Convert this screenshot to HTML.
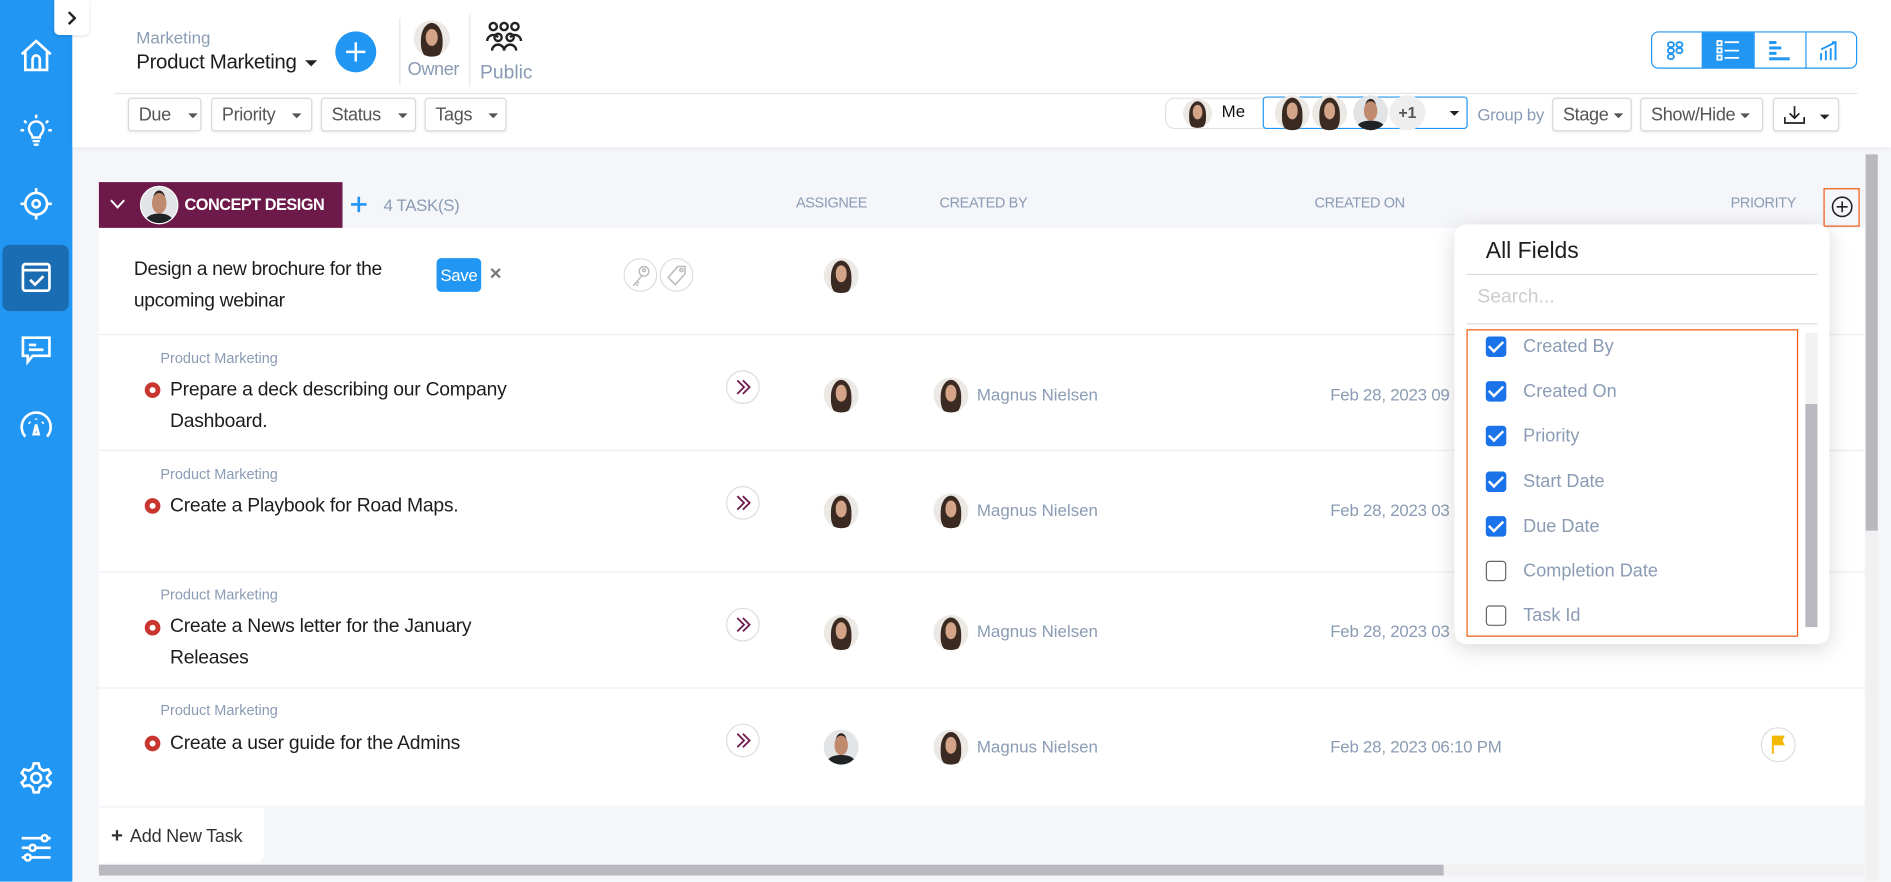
<!DOCTYPE html>
<html><head><meta charset="utf-8">
<style>
*{box-sizing:border-box;margin:0;padding:0}
html,body{width:1891px;height:881px;overflow:hidden;background:#f5f6fa;font-family:"Liberation Sans",sans-serif}
#w{position:absolute;left:0;top:0;width:1568px;height:731px;transform:scale(1.20600);transform-origin:0 0;background:#f5f6fa}
.a{position:absolute}
.side{left:0;top:0;width:60px;height:731px;background:#2196f3}
.ico{position:absolute;left:14px;width:32px;height:32px}
.hdr{left:60px;top:0;width:1508px;height:122px;background:#fff;box-shadow:0 2px 4px rgba(0,0,0,.04)}
.btn{position:absolute;top:81px;height:28px;border:1px solid #d8d8d8;border-radius:3px;background:#fff;font-size:15px;color:#555;padding:5px 0 0 8px;box-shadow:0 1px 2px rgba(0,0,0,.06);letter-spacing:-.3px}
.car{display:inline-block;width:0;height:0;border-left:4px solid transparent;border-right:4px solid transparent;border-top:4px solid #555;vertical-align:middle}
.av{position:absolute;border-radius:50%;overflow:hidden;background:#ece8e4}
.av:before{content:"";position:absolute;left:20%;top:8%;width:60%;height:96%;border-radius:50% 50% 40% 40%;background:#3a2a22}
.av:after{content:"";position:absolute;left:33%;top:22%;width:34%;height:48%;border-radius:50%;background:#d4a488}
.av.m{background:#e2e4e6}
.av.m:before{background:#1f2326;top:72%;height:40%;left:12%;width:76%;border-radius:50% 50% 0 0}
.av.m:after{background:#c08a6e;top:18%;left:30%;width:40%;height:54%;box-shadow:0 -3px 0 -1px #2a211c}
.colh{position:absolute;top:161px;font-size:12px;color:#8a9bb4;letter-spacing:-.3px}
.row{position:absolute;left:82px;width:1464px;background:#fff;border-bottom:1px solid #eceef2}
.proj{position:absolute;left:51px;font-size:12px;color:#8a9bb4}
.tt{position:absolute;left:59px;font-size:16px;color:#1d1d1d;line-height:26px;letter-spacing:-.2px}
.dot{position:absolute;left:38px;width:13px;height:13px;border-radius:50%;border:4px solid #c9362f;background:#fff}
.chev{position:absolute;left:520px;width:28px;height:28px;border-radius:50%;border:1px solid #ddd}
.name{position:absolute;left:728px;font-size:14px;color:#8a9bb4}
.date{position:absolute;left:1021px;font-size:14px;color:#8a9bb4;letter-spacing:-.2px}
.cb{position:absolute;left:1232px;width:17px;height:17px;border-radius:3px;background:#1a73e8}
.cb.u{background:#fff;border:1.5px solid #666}
.cb:not(.u):after{content:"";position:absolute;left:5px;top:1px;width:5px;height:10px;border:solid #fff;border-width:0 2px 2px 0;transform:rotate(45deg)}
.fl{position:absolute;left:1263px;font-size:15px;color:#8a9bb4}
</style></head><body><div id="w">
<div class="a side">
 <svg class="ico" style="top:30px" viewBox="0 0 32 32" fill="none" stroke="#fff" stroke-width="2.2"><path d="M4 15 16 4l12 11M7 12v16h18V12M13 28v-9a3 3 0 0 1 6 0v9"/></svg>
 <svg class="ico" style="top:92px" viewBox="0 0 32 32" fill="none" stroke="#fff" stroke-width="2"><path d="M11 18a6 6 0 1 1 10 0c-1 1.5-2 2.5-2 4h-6c0-1.5-1-2.5-2-4zM13 25h6M14 28h4M16 3v3M6 8l2 2M26 8l-2 2M3 16h3M26 16h3"/></svg>
 <svg class="ico" style="top:153px" viewBox="0 0 32 32" fill="none" stroke="#fff" stroke-width="2.2"><circle cx="16" cy="16" r="9"/><circle cx="16" cy="16" r="3"/><path d="M16 3v4M16 25v4M3 16h4M25 16h4"/></svg>
 <div class="a" style="left:2px;top:203px;width:55px;height:55px;border-radius:6px;background:#1b6db3"></div>
 <svg class="ico" style="top:214px" viewBox="0 0 32 32" fill="none" stroke="#fff" stroke-width="2.2"><rect x="5" y="5" width="22" height="22" rx="2"/><path d="M5 10h22M11 18l4 4 7-7"/></svg>
 <svg class="ico" style="top:274px" viewBox="0 0 32 32" fill="none" stroke="#fff" stroke-width="2.2"><path d="M5 6h22v15H13l-4 5v-5H5z"/><path d="M10 12h6M10 16h12"/></svg>
 <svg class="ico" style="top:336px" viewBox="0 0 32 32" fill="none" stroke="#fff" stroke-width="2.2"><path d="M7 26a12 12 0 1 1 18 0"/><path d="M16 11v1M10 14l1 1M22 14l-1 1M16 16l-2 8h4z"/></svg>
 <svg class="ico" style="top:629px" viewBox="0 0 32 32" fill="none" stroke="#fff" stroke-width="2.2"><circle cx="16" cy="16" r="4"/><path d="M14 4h4l1 4 3 2 4-1 2 3-3 3v2l3 3-2 3-4-1-3 2-1 4h-4l-1-4-3-2-4 1-2-3 3-3v-2l-3-3 2-3 4 1 3-2z"/></svg>
 <svg class="ico" style="top:687px" viewBox="0 0 32 32" fill="none" stroke="#fff" stroke-width="2.2"><path d="M4 8h16M26 8h2M4 16h6M16 16h12M4 24h2M12 24h16"/><circle cx="23" cy="8" r="2.5"/><circle cx="13" cy="16" r="2.5"/><circle cx="9" cy="24" r="2.5"/></svg>
</div>
<div class="a hdr"></div>
<div class="a" style="left:45px;top:0;width:29px;height:29px;background:#fff;border-radius:0 0 4px 4px;box-shadow:0 1px 3px rgba(0,0,0,.1)"><svg class="a" style="left:10px;top:9px" width="9" height="12" viewBox="0 0 9 12" fill="none" stroke="#222" stroke-width="2"><path d="M2 1l5 5-5 5"/></svg></div>
<div class="a" style="left:113px;top:23px;font-size:14px;color:#8a9bb4">Marketing</div>
<div class="a" style="left:113px;top:42px;font-size:17px;color:#1d1d1d;letter-spacing:-.3px">Product Marketing <span class="car" style="border-width:5px 5px 0;border-top-color:#222;margin-left:3px"></span></div>
<div class="a" style="left:278px;top:26px;width:34px;height:34px;border-radius:50%;background:#2196f3"><svg class="a" style="left:8px;top:8px" width="18" height="18" viewBox="0 0 18 18" stroke="#fff" stroke-width="2"><path d="M9 1v16M1 9h16"/></svg></div>
<div class="a" style="left:331px;top:15px;width:1px;height:55px;background:#e5e5e5"></div>
<div class="av a" style="left:343px;top:17px;width:30px;height:30px"></div>
<div class="a" style="left:338px;top:49px;font-size:15px;color:#8a9bb4;letter-spacing:-.3px">Owner</div>
<div class="a" style="left:389px;top:12px;width:1px;height:60px;background:#e5e5e5"></div>
<svg class="a" style="left:402px;top:17px" width="32" height="26" viewBox="0 0 32 26" fill="none" stroke="#222" stroke-width="2"><circle cx="7" cy="5" r="3"/><circle cx="16" cy="5" r="3"/><circle cx="25" cy="5" r="3"/><path d="M2 17a5 5 0 0 1 9-3M21 14a5 5 0 0 1 9 3"/><circle cx="11" cy="14" r="3"/><circle cx="21" cy="14" r="3"/><path d="M6 25a5 5 0 0 1 10 0M16 25a5 5 0 0 1 10 0"/></svg>
<div class="a" style="left:398px;top:52px;font-size:16px;color:#8a9bb4">Public</div>
<div class="a" style="left:1369px;top:26px;width:171px;height:31px;border:1px solid #2196f3;border-radius:6px;overflow:hidden;background:#fff">
 <div class="a" style="left:41px;top:0;width:43px;height:31px;background:#2196f3"></div>
 <div class="a" style="left:84px;top:0;width:1px;height:31px;background:#2196f3"></div>
 <div class="a" style="left:127px;top:0;width:1px;height:31px;background:#2196f3"></div>
 <svg class="a" style="left:12px;top:7px" width="16" height="16" viewBox="0 0 16 16" fill="none" stroke="#2196f3" stroke-width="1.5"><rect x="1" y="1" width="5" height="4" rx="2"/><rect x="8" y="1" width="5" height="4" rx="2"/><rect x="1" y="6" width="5" height="4" rx="2"/><rect x="8" y="6" width="5" height="4" rx="2"/><rect x="1" y="11" width="5" height="4" rx="2"/></svg>
 <svg class="a" style="left:53px;top:6px" width="20" height="18" viewBox="0 0 20 18" fill="none" stroke="#fff" stroke-width="1.5"><rect x="1" y="1" width="3.5" height="3.5"/><rect x="1" y="7" width="3.5" height="3.5"/><rect x="1" y="13" width="3.5" height="3.5"/><path d="M7 2h12M7 9h12M7 15h12"/></svg>
 <svg class="a" style="left:96px;top:6px" width="20" height="18" viewBox="0 0 20 18" fill="#2196f3"><rect x="1" y="1" width="6" height="2.5"/><rect x="1" y="5.5" width="10" height="2.5"/><rect x="1" y="10" width="6" height="2.5"/><rect x="1" y="14.5" width="17" height="2.5"/></svg>
 <svg class="a" style="left:138px;top:6px" width="20" height="18" viewBox="0 0 20 18" fill="none" stroke="#2196f3" stroke-width="1.6"><path d="M2 17v-6M6 17v-8M10 17v-10M14 17v-12M2 8l12-6M11 2h3v3"/></svg>
</div>
<div class="a" style="left:95px;top:77px;width:1445px;height:1px;background:#e3e3e3"></div>
<div class="btn" style="left:106px;width:61px">Due <span class="car" style="margin-left:10px"></span></div>
<div class="btn" style="left:175px;width:84px">Priority <span class="car" style="margin-left:10px"></span></div>
<div class="btn" style="left:266px;width:79px">Status <span class="car" style="margin-left:10px"></span></div>
<div class="btn" style="left:352px;width:68px">Tags <span class="car" style="margin-left:10px"></span></div>
<div class="a" style="left:966px;top:81px;width:90px;height:26px;border:1px solid #e2e2e2;border-radius:8px;background:#fff"></div>
<div class="av a" style="left:981px;top:82px;width:24px;height:24px"></div>
<div class="a" style="left:1013px;top:84px;font-size:14px;color:#111">Me</div>
<div class="a" style="left:1047px;top:80px;width:170px;height:27px;border:1px solid #2196f3;border-radius:3px;background:#fff"></div>
<div class="av a" style="left:1057px;top:79px;width:29px;height:29px"></div>
<div class="av a" style="left:1088px;top:79px;width:29px;height:29px"></div>
<div class="av a m" style="left:1122px;top:79px;width:29px;height:29px"></div>
<div class="a" style="left:1152px;top:79px;width:30px;height:29px;border-radius:50%;background:#eee;font-size:13px;color:#555;text-align:center;line-height:29px;font-weight:bold">+1</div>
<span class="car a" style="left:1202px;top:92px;border-top-color:#222"></span>
<div class="a" style="left:1225px;top:87px;font-size:14px;color:#8a9bb4;letter-spacing:-.3px">Group by</div>
<div class="btn" style="left:1287px;width:66px">Stage <span class="car"></span></div>
<div class="btn" style="left:1360px;width:102px">Show/Hide <span class="car"></span></div>
<div class="btn" style="left:1470px;width:55px"><svg width="18" height="16" viewBox="0 0 18 16" fill="none" stroke="#222" stroke-width="1.4" style="vertical-align:-2px"><path d="M9 1v10M5 7l4 4 4-4M1 10v5h16v-5"/></svg> <span class="car" style="margin-left:8px;border-top-color:#222"></span></div>
<div class="a" style="left:1547px;top:128px;width:10px;height:603px;background:#f1f1f1"></div>
<div class="a" style="left:1547px;top:128px;width:10px;height:312px;background:#b8b8be"></div>
<div class="a" style="left:82px;top:151px;width:202px;height:38px;background:#6d1a4b"></div>
<svg class="a" style="left:91px;top:165px" width="13" height="9" viewBox="0 0 13 9" fill="none" stroke="#fff" stroke-width="1.6"><path d="M1 1l5.5 6L12 1"/></svg>
<div class="av a m" style="left:116px;top:154px;width:32px;height:32px;border:1px solid #fff"></div>
<div class="a" style="left:153px;top:162px;font-size:13.5px;color:#fff;font-weight:bold;letter-spacing:-.4px">CONCEPT DESIGN</div>
<svg class="a" style="left:291px;top:163px" width="13" height="13" viewBox="0 0 13 13" stroke="#2196f3" stroke-width="2.2"><path d="M6.5 0v13M0 6.5h13"/></svg>
<div class="a" style="left:318px;top:162px;font-size:14px;color:#8a9bb4;letter-spacing:-.3px">4 TASK(S)</div>
<div class="colh" style="left:660px">ASSIGNEE</div>
<div class="colh" style="left:779px">CREATED BY</div>
<div class="colh" style="left:1090px">CREATED ON</div>
<div class="colh" style="left:1435px">PRIORITY</div>
<div class="a" style="left:1512px;top:156px;width:30px;height:32px;border:1.5px solid #f05a14"></div>
<svg class="a" style="left:1518px;top:162px" width="19" height="19" viewBox="0 0 19 19" fill="none" stroke="#222" stroke-width="1.3"><circle cx="9.5" cy="9.5" r="8"/><path d="M9.5 5v9M5 9.5h9"/></svg>
<div class="row" style="top:189px;height:89px">
 <div class="a" style="left:29px;top:22px;font-size:16px;color:#1d1d1d;line-height:26px;letter-spacing:-.3px">Design a new brochure for the<br>upcoming webinar</div>
 <div class="a" style="left:280px;top:25px;width:37px;height:28px;background:#2196f3;border-radius:4px;color:#fff;font-size:14px;text-align:center;line-height:28px;letter-spacing:-.3px">Save</div>
 <div class="a" style="left:324px;top:28px;font-size:17px;color:#777;font-weight:bold">×</div>
 <div class="a" style="left:435px;top:25px;width:28px;height:28px;border-radius:50%;border:1px solid #ddd"><svg class="a" style="left:5px;top:4px" width="18" height="20" viewBox="0 0 18 20" fill="none" stroke="#bbb" stroke-width="1.2"><circle cx="11" cy="6" r="4"/><circle cx="11" cy="5" r="1.2"/><path d="M9 10 2 18M4 16l2 2M5 14l2 2"/></svg></div>
 <div class="a" style="left:465px;top:25px;width:28px;height:28px;border-radius:50%;border:1px solid #ddd"><svg class="a" style="left:5px;top:4px" width="18" height="20" viewBox="0 0 18 20" fill="none" stroke="#bbb" stroke-width="1.3"><path d="M9 2h6v6l-8 9-6-6z"/><circle cx="12" cy="5" r="1.3"/></svg></div>
 <div class="av a" style="left:601px;top:25px;width:29px;height:29px"></div>
</div>
<svg width="0" height="0" style="position:absolute"><defs><symbol id="ch" viewBox="0 0 28 28"><path d="M9 8l6 6-6 6M14 8l6 6-6 6" fill="none" stroke="#6d1a4b" stroke-width="1.6"/></symbol></defs></svg>
<div class="row" style="top:278px;height:96px">
 <div class="proj" style="top:12px">Product Marketing</div><div class="dot" style="top:39px"></div>
 <div class="tt" style="top:33px">Prepare a deck describing our Company<br>Dashboard.</div>
 <div class="chev" style="top:29px"><svg width="26" height="26"><use href="#ch"/></svg></div>
 <div class="av a" style="left:601px;top:35px;width:29px;height:29px"></div>
 <div class="av a" style="left:692px;top:35px;width:29px;height:29px"></div>
 <div class="name" style="top:41px">Magnus Nielsen</div><div class="date" style="top:41px">Feb 28, 2023 09</div>
</div>
<div class="row" style="top:374px;height:101px">
 <div class="proj" style="top:12px">Product Marketing</div><div class="dot" style="top:39px"></div>
 <div class="tt" style="top:33px">Create a Playbook for Road Maps.</div>
 <div class="chev" style="top:29px"><svg width="26" height="26"><use href="#ch"/></svg></div>
 <div class="av a" style="left:601px;top:35px;width:29px;height:29px"></div>
 <div class="av a" style="left:692px;top:35px;width:29px;height:29px"></div>
 <div class="name" style="top:41px">Magnus Nielsen</div><div class="date" style="top:41px">Feb 28, 2023 03</div>
</div>
<div class="row" style="top:475px;height:96px">
 <div class="proj" style="top:11px">Product Marketing</div><div class="dot" style="top:39px"></div>
 <div class="tt" style="top:32px">Create a News letter for the January<br>Releases</div>
 <div class="chev" style="top:29px"><svg width="26" height="26"><use href="#ch"/></svg></div>
 <div class="av a" style="left:601px;top:35px;width:29px;height:29px"></div>
 <div class="av a" style="left:692px;top:35px;width:29px;height:29px"></div>
 <div class="name" style="top:40px">Magnus Nielsen</div><div class="date" style="top:40px">Feb 28, 2023 03</div>
</div>
<div class="row" style="top:571px;height:97px;border:none">
 <div class="proj" style="top:11px">Product Marketing</div><div class="dot" style="top:39px"></div>
 <div class="tt" style="top:33px">Create a user guide for the Admins</div>
 <div class="chev" style="top:29px"><svg width="26" height="26"><use href="#ch"/></svg></div>
 <div class="av a m" style="left:601px;top:34px;width:29px;height:29px"></div>
 <div class="av a" style="left:692px;top:34px;width:29px;height:29px"></div>
 <div class="name" style="top:40px">Magnus Nielsen</div><div class="date" style="top:40px">Feb 28, 2023 06:10 PM</div>
 <div class="a" style="left:1378px;top:32px;width:29px;height:29px;border-radius:50%;border:1px solid #ddd"></div>
 <svg class="a" style="left:1386px;top:38px" width="14" height="17" viewBox="0 0 14 17"><path d="M2 1v15" stroke="#f5b800" stroke-width="1.6"/><path d="M2 1h10l-2 4 2 4H2z" fill="#f5b800"/></svg>
</div>
<div class="a" style="left:82px;top:670px;width:137px;height:46px;background:#fff;border-radius:0 0 8px 0"></div>
<div class="a" style="left:92px;top:683px;font-size:15px;color:#333;letter-spacing:-.2px"><b style="font-size:17px;margin-right:6px">+</b>Add New Task</div>
<div class="a" style="left:82px;top:717px;width:1464px;height:9px;background:#f1f1f1"></div>
<div class="a" style="left:82px;top:717px;width:1115px;height:9px;background:#b8b8be"></div>
<div class="a" style="left:1206px;top:186px;width:311px;height:348px;background:#fff;border-radius:10px;box-shadow:0 4px 18px rgba(0,0,0,.15)"></div>
<div class="a" style="left:1232px;top:198px;font-size:19px;color:#1d1d1d">All Fields</div>
<div class="a" style="left:1216px;top:227px;width:291px;height:1px;background:#ddd"></div>
<div class="a" style="left:1225px;top:238px;font-size:16px;color:#ccc">Search...</div>
<div class="a" style="left:1216px;top:268px;width:291px;height:1px;background:#ddd"></div>
<div class="a" style="left:1497px;top:276px;width:10px;height:244px;background:#f1f1f1"></div>
<div class="a" style="left:1497px;top:335px;width:10px;height:185px;background:#b8b8be"></div>
<div class="a" style="left:1216px;top:273px;width:275px;height:255px;border:1.5px solid #f05a14"></div>
<div class="cb" style="top:279px"></div><div class="fl" style="top:279px">Created By</div>
<div class="cb" style="top:316px"></div><div class="fl" style="top:316px">Created On</div>
<div class="cb" style="top:353px"></div><div class="fl" style="top:353px">Priority</div>
<div class="cb" style="top:391px"></div><div class="fl" style="top:391px">Start Date</div>
<div class="cb" style="top:428px"></div><div class="fl" style="top:428px">Due Date</div>
<div class="cb u" style="top:465px"></div><div class="fl" style="top:465px">Completion Date</div>
<div class="cb u" style="top:502px"></div><div class="fl" style="top:502px">Task Id</div>
</div></body></html>
